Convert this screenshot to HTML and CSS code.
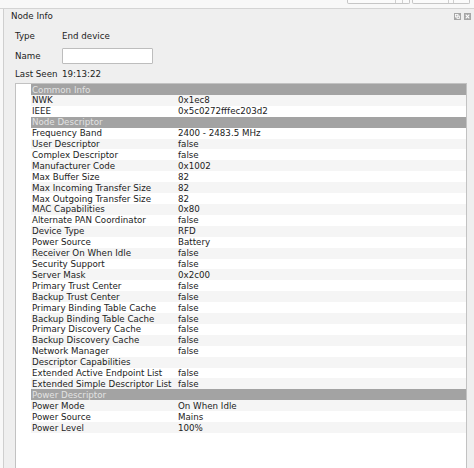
FILE: index.html
```html
<!DOCTYPE html>
<html>
<head>
<meta charset="utf-8">
<link rel="stylesheet" href="styles.css">
</head>
<body>
<div class="topbar">
  <div class="spin spin-a"><span class="seg s48"></span><span class="seg s7"></span><span class="seg s7 last"></span></div>
  <div class="spin spin-b"><span class="seg s36"></span><span class="seg s5"></span><span class="seg s16 last"></span></div>
</div>
<div class="main">
  <div class="dock">
    <div class="titlebar">
      <span class="title">Node Info</span>
      <div class="tbtns">
        <svg class="tbtn" width="7" height="7" viewBox="0 0 7 7"><rect width="7" height="7" fill="#a6a6a6"/><rect x="1.5" y="1.5" width="2.5" height="2.5" fill="none" stroke="#ffffff" stroke-width="0.8"/><rect x="3" y="3" width="2.5" height="2.5" fill="none" stroke="#ffffff" stroke-width="0.8"/></svg>
        <svg class="tbtn" width="7" height="7" viewBox="0 0 7 7"><rect width="7" height="7" fill="#a6a6a6"/><path d="M1.7 1.7L5.3 5.3M5.3 1.7L1.7 5.3" stroke="#ffffff" stroke-width="1.1"/></svg>
      </div>
    </div>
    <div class="form">
      <div class="frow r-type"><span class="flabel">Type</span><span>End device</span></div>
      <div class="frow r-name"><span class="flabel">Name</span><span class="input"></span></div>
      <div class="frow r-seen"><span class="flabel">Last Seen</span><span>19:13:22</span></div>
    </div>
    <div class="tree">
      <div class="row hdr"><span class="k">Common Info</span></div>
      <div class="row alt"><span class="k">NWK</span><span class="v">0x1ec8</span></div>
      <div class="row"><span class="k">IEEE</span><span class="v">0x5c0272fffec203d2</span></div>
      <div class="row hdr"><span class="k">Node Descriptor</span></div>
      <div class="row"><span class="k">Frequency Band</span><span class="v">2400 - 2483.5 MHz</span></div>
      <div class="row alt"><span class="k">User Descriptor</span><span class="v">false</span></div>
      <div class="row"><span class="k">Complex Descriptor</span><span class="v">false</span></div>
      <div class="row alt"><span class="k">Manufacturer Code</span><span class="v">0x1002</span></div>
      <div class="row"><span class="k">Max Buffer Size</span><span class="v">82</span></div>
      <div class="row alt"><span class="k">Max Incoming Transfer Size</span><span class="v">82</span></div>
      <div class="row"><span class="k">Max Outgoing Transfer Size</span><span class="v">82</span></div>
      <div class="row alt"><span class="k">MAC Capabilities</span><span class="v">0x80</span></div>
      <div class="row"><span class="k">Alternate PAN Coordinator</span><span class="v">false</span></div>
      <div class="row alt"><span class="k">Device Type</span><span class="v">RFD</span></div>
      <div class="row"><span class="k">Power Source</span><span class="v">Battery</span></div>
      <div class="row alt"><span class="k">Receiver On When Idle</span><span class="v">false</span></div>
      <div class="row"><span class="k">Security Support</span><span class="v">false</span></div>
      <div class="row alt"><span class="k">Server Mask</span><span class="v">0x2c00</span></div>
      <div class="row"><span class="k">Primary Trust Center</span><span class="v">false</span></div>
      <div class="row alt"><span class="k">Backup Trust Center</span><span class="v">false</span></div>
      <div class="row"><span class="k">Primary Binding Table Cache</span><span class="v">false</span></div>
      <div class="row alt"><span class="k">Backup Binding Table Cache</span><span class="v">false</span></div>
      <div class="row"><span class="k">Primary Discovery Cache</span><span class="v">false</span></div>
      <div class="row alt"><span class="k">Backup Discovery Cache</span><span class="v">false</span></div>
      <div class="row"><span class="k">Network Manager</span><span class="v">false</span></div>
      <div class="row alt"><span class="k">Descriptor Capabilities</span><span class="v"></span></div>
      <div class="row"><span class="k">Extended Active Endpoint List</span><span class="v">false</span></div>
      <div class="row alt"><span class="k">Extended Simple Descriptor List</span><span class="v">false</span></div>
      <div class="row hdr"><span class="k">Power Descriptor</span></div>
      <div class="row alt"><span class="k">Power Mode</span><span class="v">On When Idle</span></div>
      <div class="row"><span class="k">Power Source</span><span class="v">Mains</span></div>
      <div class="row alt"><span class="k">Power Level</span><span class="v">100%</span></div>
    </div>
  </div>
</div>
</body>
</html>
```

FILE: styles.css
```css
html, body {
  margin: 0;
  padding: 0;
  height: 468px;
  overflow: hidden;
}
body {
  background: #f8f8f8;
  font-family: "DejaVu Sans", sans-serif;
  font-size: 8.7px;
  line-height: 11px;
  color: #222222;
}
.topbar {
  height: 8px;
  border-bottom: 1px solid #d4d4d4;
  display: flex;
  justify-content: flex-end;
  align-items: flex-start;
  gap: 2px;
  padding-right: 4px;
}
.spin {
  display: flex;
  height: 3px;
  border: 1px solid #c6c6c6;
  border-top: none;
  border-radius: 0 0 2px 2px;
  background: #fbfbfb;
}
.seg {
  display: block;
  height: 3px;
  border-right: 1px solid #cfcfcf;
}
.seg.last { border-right: none; }
.s48 { width: 47px; }
.s7 { width: 6px; }
.s36 { width: 35px; }
.s5 { width: 4px; }
.s16 { width: 15px; }
.main {
  display: flex;
  padding-left: 3px;
  height: 459px;
}
.dock {
  flex: 1;
  background: #efefef;
  border-left: 1px solid #cfcfcf;
  display: flex;
  flex-direction: column;
}
.titlebar {
  display: flex;
  align-items: center;
  justify-content: space-between;
  height: 11px;
  margin-top: 2px;
  padding-left: 7px;
  padding-right: 3px;
}
.tbtns {
  display: flex;
  gap: 3px;
}
.tbtn { display: block; }
.form {
  padding-left: 11px;
  display: flex;
  flex-direction: column;
}
.frow {
  display: flex;
  align-items: center;
}
.flabel { width: 47px; }
.r-type { margin-top: 9px; height: 11px; }
.r-name { margin-top: 6px; height: 16px; padding-top: 1px; box-sizing: border-box; }
.r-seen { margin-top: 5px; height: 11px; }
.input {
  display: block;
  width: 89px;
  height: 14px;
  background: #ffffff;
  border: 1px solid #bdbdbd;
  border-radius: 1px;
  margin-top: -1px;
}
.tree {
  margin: 3px 7px 0 11px;
  flex: 1;
  min-height: 0;
  overflow: hidden;
  background: #ffffff;
  border: 1px solid #c2c2c2;
  border-bottom: none;
  padding-left: 15px;
}
.row {
  display: flex;
  height: 10.92px;
  line-height: 10.92px;
  padding-top: 0.5px;
  box-sizing: border-box;
  white-space: nowrap;
}
.row.alt { background: #f5f5f5; }
.row.hdr {
  background: #a3a3a3;
  color: #e2e2e2;
}
.k {
  width: 146px;
  padding-left: 1px;
}
.v { flex: 1; }
```
